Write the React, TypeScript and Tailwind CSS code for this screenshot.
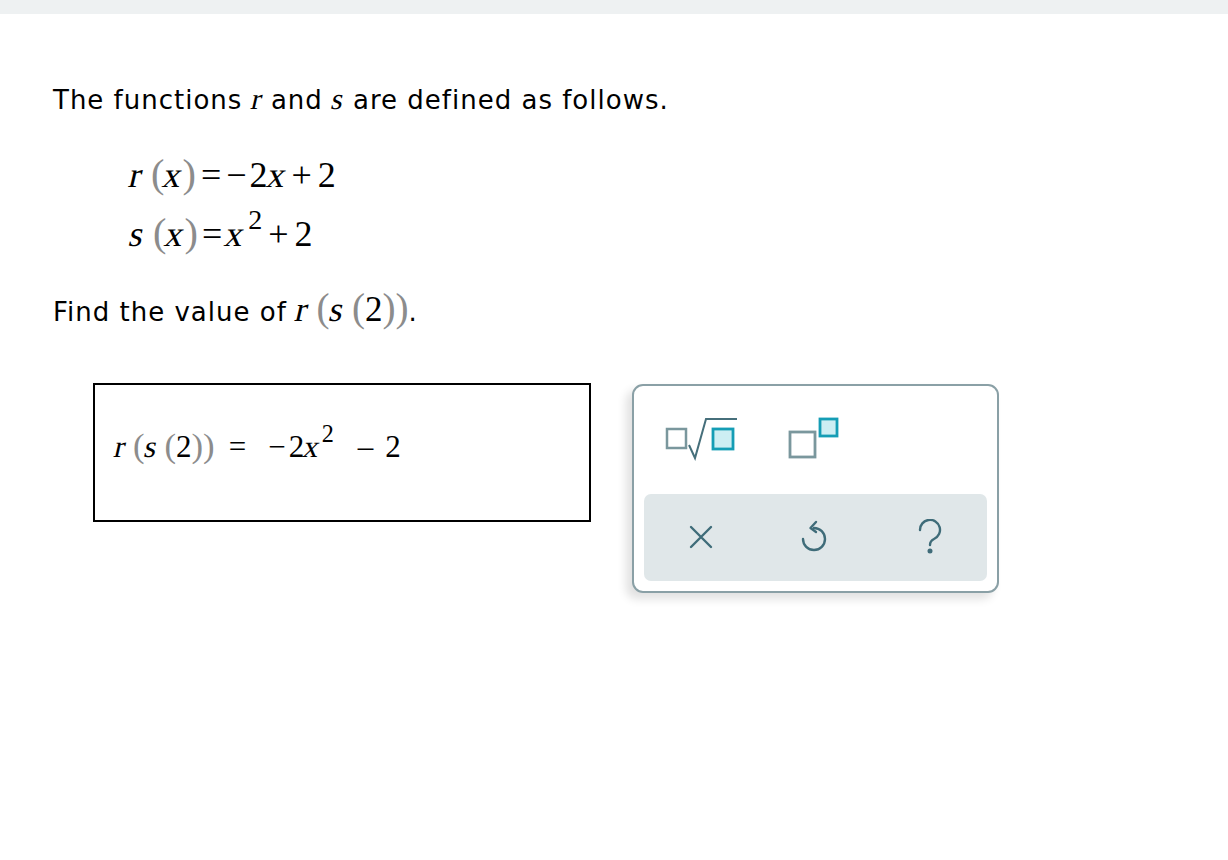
import React from 'react';

const serif = "font-['Liberation_Serif','Times_New_Roman',serif]";

function P({ children }: { children: React.ReactNode }) {
    return <span className="text-[#8c8c8c] font-light text-[1.12em] leading-none">{children}</span>;
}

// italic face is missing for the serif, so slant the roman glyphs
function V({ children }: { children: React.ReactNode }) {
    return <span className="inline-block -skew-x-[13deg]">{children}</span>;
}

function Sup({ children }: { children: React.ReactNode }) {
    return <span className="relative -top-[0.62em] ml-[4px] text-[0.78em] leading-none">{children}</span>;
}

function SqrtIcon() {
    return (
        <svg width="74" height="44" viewBox="0 0 74 44" fill="none">
            <rect x="3" y="12" width="19" height="19" stroke="#7a979d" strokeWidth="2.5" />
            <path d="M25 28 L31 41 L42 2 H73" stroke="#466f7b" strokeWidth="2" />
            <rect x="49" y="12" width="20" height="20" fill="#cdeef3" stroke="#159db5" strokeWidth="2.8" />
        </svg>
    );
}

function PowerIcon() {
    return (
        <svg width="54" height="44" viewBox="0 0 54 44" fill="none">
            <rect x="2" y="15" width="25" height="25" stroke="#7a979d" strokeWidth="2.8" />
            <rect x="32" y="2" width="17" height="17" fill="#cdeef3" stroke="#159db5" strokeWidth="2.8" />
        </svg>
    );
}

export default function App() {
    return (
        <div className="w-[1228px] h-[860px] bg-white text-black font-['DejaVu_Sans',Verdana,sans-serif]">
            <div className="h-[14px] bg-[#eef1f2]" />
            <div className="pl-[53px] pt-[69px]">
                <p className="text-[26px] leading-[32px] tracking-[1px]">
                    The functions <span className={`${serif} text-[30px] tracking-normal`}><V>r</V></span> and{' '}
                    <span className={`${serif} text-[30px] tracking-normal`}><V>s</V></span> are defined as follows.
                </p>

                <div className={`${serif} ml-[77px] mt-[30px] text-[36px] leading-[59px]`}>
                    <div>
                        <V>r</V> <P>(</P><V>x</V><P>)</P>
                        <span className="mx-[5px]">=</span>−<span className="ml-[3px]">2</span><V>x</V>
                        <span className="mx-[6px]">+</span>2
                    </div>
                    <div>
                        <V>s</V> <P>(</P><V>x</V><P>)</P>
                        <span className="mx-[4px]">=</span><V>x</V>
                        <Sup>2</Sup>
                        <span className="mx-[6px]">+</span>2
                    </div>
                </div>

                <p className="mt-[24px] text-[26px] leading-[40px] tracking-[1px]">
                    Find the value of{' '}
                    <span className={`${serif} text-[35px] tracking-normal`}>
                        <V>r</V> <P>(</P><V>s</V> <P>(</P>2<P>)</P><P>)</P>
                    </span>
                    .
                </p>

                <div className="mt-[51px] ml-[40px] flex gap-[41px] items-start">
                    <div className="w-[498px] h-[139px] border-2 border-black pl-[20px] pt-[42px]">
                        <div className={`${serif} text-[31px] leading-[40px] flex items-baseline`}>
                            <span>
                                <V>r</V> <P>(</P><V>s</V> <P>(</P>2<P>)</P><P>)</P>
                            </span>
                            <span className="ml-[14px]">=</span>
                            <span className="ml-[22px]">−<span className="ml-[3px]">2</span><V>x</V></span>
                            <span className="relative -top-[0.62em] ml-[2px] text-[0.78em] leading-none">2</span>
                            <span className="ml-[24px]">–</span>
                            <span className="ml-[12px]">2</span>
                        </div>
                    </div>

                    <div className="w-[367px] h-[209px] mt-px rounded-[11px] border-2 border-[#8aa0a6] bg-white shadow-[-6px_6px_10px_rgba(0,0,0,0.12)] px-[10px] pt-[31px] pb-[10px] flex flex-col">
                        <div className="grid grid-cols-3 h-[67px]">
                            <div className="flex justify-center">
                                <SqrtIcon />
                            </div>
                            <div className="flex justify-center">
                                <PowerIcon />
                            </div>
                        </div>
                        <div className="mt-[10px] h-[88px] rounded-[7px] bg-[#e0e7e9] grid grid-cols-3 items-center">
                            <div className="flex justify-center">
                                <svg width="26" height="26" viewBox="0 0 26 26" fill="none" stroke="#3f6c79" strokeWidth="2.4" strokeLinecap="round">
                                    <path d="M3 3 L23 23 M23 3 L3 23" />
                                </svg>
                            </div>
                            <div className="flex justify-center">
                                <svg width="32" height="34" viewBox="0 0 32 34" fill="none" stroke="#3f6c79" strokeWidth="2.4" strokeLinecap="round" strokeLinejoin="round">
                                    <path d="M15 8 A11 11 0 1 1 4 19" />
                                    <path d="M17 2 L11.5 8 L17 12" />
                                </svg>
                            </div>
                            <div className="flex justify-center">
                                <svg width="26" height="36" viewBox="0 0 26 36" fill="none" stroke="#3f6c79" strokeWidth="2.4" strokeLinecap="round">
                                    <path d="M3 11 A10 10 0 1 1 17 20 C14 21.5 13 23 13 26" />
                                    <circle cx="13" cy="32" r="1.3" fill="#3f6c79" />
                                </svg>
                            </div>
                        </div>
                    </div>
                </div>
            </div>
        </div>
    );
}
